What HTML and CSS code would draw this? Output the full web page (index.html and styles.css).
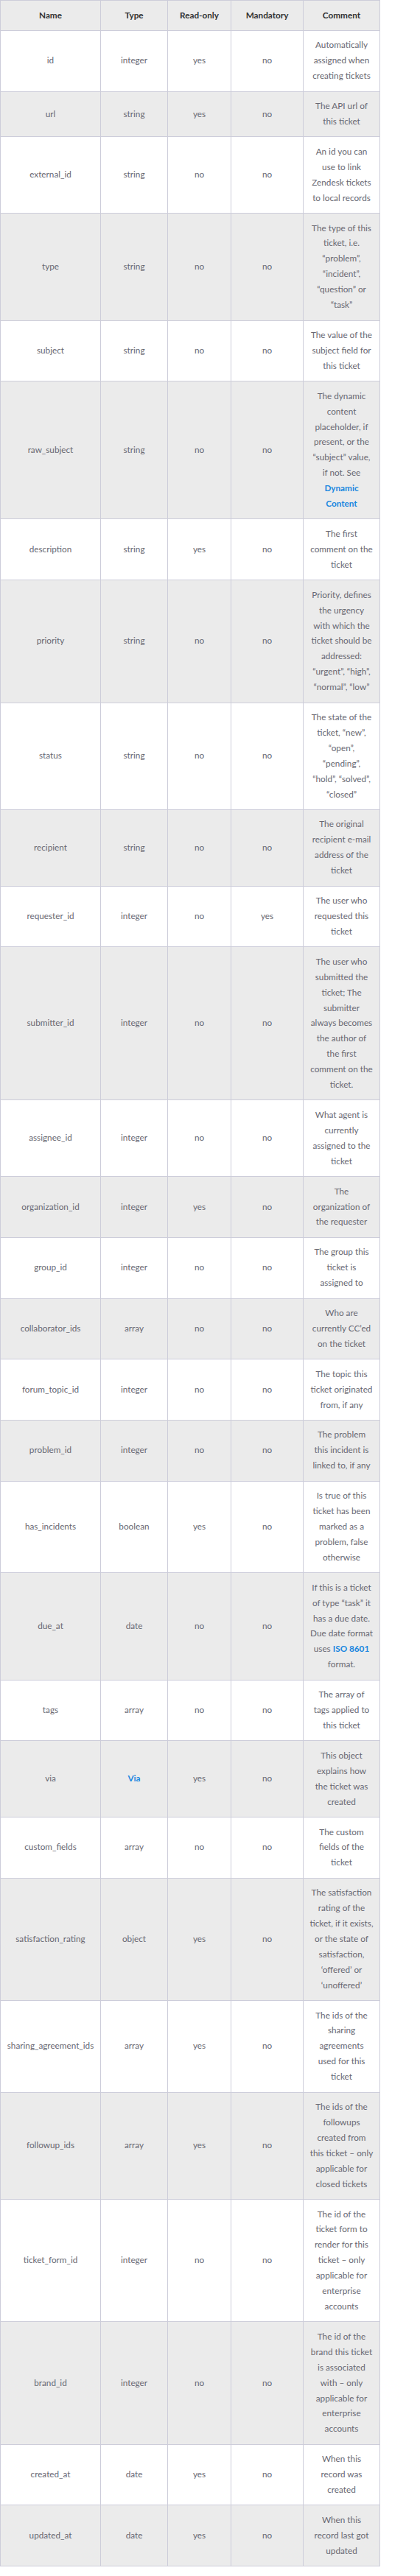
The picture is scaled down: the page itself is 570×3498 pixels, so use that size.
FILE: index.html
```html
<!DOCTYPE html>
<html lang="en">
<head>
<meta charset="utf-8">
<title>Ticket fields</title>
<link rel="stylesheet" href="styles.css">
</head>
<body>
<table class="fields">
  <colgroup>
    <col class="c-name">
    <col class="c-type">
    <col class="c-ro">
    <col class="c-man">
    <col class="c-com">
  </colgroup>
  <thead>
    <tr><th>Name</th><th>Type</th><th>Read-only</th><th>Mandatory</th><th>Comment</th></tr>
  </thead>
  <tbody>
    <tr><td>id</td><td>integer</td><td>yes</td><td>no</td><td class="com">Automatically<br>assigned when<br>creating tickets</td></tr>
    <tr><td>url</td><td>string</td><td>yes</td><td>no</td><td class="com">The API url of<br>this ticket</td></tr>
    <tr><td>external_id</td><td>string</td><td>no</td><td>no</td><td class="com">An id you can<br>use to link<br>Zendesk tickets<br>to local records</td></tr>
    <tr><td>type</td><td>string</td><td>no</td><td>no</td><td class="com">The type of this<br>ticket, i.e.<br>“problem”,<br>“incident”,<br>“question” or<br>“task”</td></tr>
    <tr><td>subject</td><td>string</td><td>no</td><td>no</td><td class="com">The value of the<br>subject field for<br>this ticket</td></tr>
    <tr><td>raw_subject</td><td>string</td><td>no</td><td>no</td><td class="com">The dynamic<br>content<br>placeholder, if<br>present, or the<br>“subject” value,<br>if not. See<br><a href="#">Dynamic<br>Content</a></td></tr>
    <tr><td>description</td><td>string</td><td>yes</td><td>no</td><td class="com">The first<br>comment on the<br>ticket</td></tr>
    <tr><td>priority</td><td>string</td><td>no</td><td>no</td><td class="com">Priority, defines<br>the urgency<br>with which the<br>ticket should be<br>addressed:<br>“urgent”, “high”,<br>“normal”, “low”</td></tr>
    <tr><td>status</td><td>string</td><td>no</td><td>no</td><td class="com">The state of the<br>ticket, “new”,<br>“open”,<br>“pending”,<br>“hold”, “solved”,<br>“closed”</td></tr>
    <tr><td>recipient</td><td>string</td><td>no</td><td>no</td><td class="com">The original<br>recipient e-mail<br>address of the<br>ticket</td></tr>
    <tr><td>requester_id</td><td>integer</td><td>no</td><td>yes</td><td class="com">The user who<br>requested this<br>ticket</td></tr>
    <tr><td>submitter_id</td><td>integer</td><td>no</td><td>no</td><td class="com">The user who<br>submitted the<br>ticket; The<br>submitter<br>always becomes<br>the author of<br>the first<br>comment on the<br>ticket.</td></tr>
    <tr><td>assignee_id</td><td>integer</td><td>no</td><td>no</td><td class="com">What agent is<br>currently<br>assigned to the<br>ticket</td></tr>
    <tr><td>organization_id</td><td>integer</td><td>yes</td><td>no</td><td class="com">The<br>organization of<br>the requester</td></tr>
    <tr><td>group_id</td><td>integer</td><td>no</td><td>no</td><td class="com">The group this<br>ticket is<br>assigned to</td></tr>
    <tr><td>collaborator_ids</td><td>array</td><td>no</td><td>no</td><td class="com">Who are<br>currently CC’ed<br>on the ticket</td></tr>
    <tr><td>forum_topic_id</td><td>integer</td><td>no</td><td>no</td><td class="com">The topic this<br>ticket originated<br>from, if any</td></tr>
    <tr><td>problem_id</td><td>integer</td><td>no</td><td>no</td><td class="com">The problem<br>this incident is<br>linked to, if any</td></tr>
    <tr><td>has_incidents</td><td>boolean</td><td>yes</td><td>no</td><td class="com">Is true of this<br>ticket has been<br>marked as a<br>problem, false<br>otherwise</td></tr>
    <tr><td>due_at</td><td>date</td><td>no</td><td>no</td><td class="com">If this is a ticket<br>of type “task” it<br>has a due date.<br>Due date format<br>uses <a href="#">ISO 8601</a><br>format.</td></tr>
    <tr><td>tags</td><td>array</td><td>no</td><td>no</td><td class="com">The array of<br>tags applied to<br>this ticket</td></tr>
    <tr><td>via</td><td><a href="#">Via</a></td><td>yes</td><td>no</td><td class="com">This object<br>explains how<br>the ticket was<br>created</td></tr>
    <tr><td>custom_fields</td><td>array</td><td>no</td><td>no</td><td class="com">The custom<br>fields of the<br>ticket</td></tr>
    <tr><td>satisfaction_rating</td><td>object</td><td>yes</td><td>no</td><td class="com">The satisfaction<br>rating of the<br>ticket, if it exists,<br>or the state of<br>satisfaction,<br>‘offered’ or<br>‘unoffered’</td></tr>
    <tr><td>sharing_agreement_ids</td><td>array</td><td>yes</td><td>no</td><td class="com">The ids of the<br>sharing<br>agreements<br>used for this<br>ticket</td></tr>
    <tr><td>followup_ids</td><td>array</td><td>yes</td><td>no</td><td class="com">The ids of the<br>followups<br>created from<br>this ticket – only<br>applicable for<br>closed tickets</td></tr>
    <tr><td>ticket_form_id</td><td>integer</td><td>no</td><td>no</td><td class="com">The id of the<br>ticket form to<br>render for this<br>ticket – only<br>applicable for<br>enterprise<br>accounts</td></tr>
    <tr><td>brand_id</td><td>integer</td><td>no</td><td>no</td><td class="com">The id of the<br>brand this ticket<br>is associated<br>with – only<br>applicable for<br>enterprise<br>accounts</td></tr>
    <tr><td>created_at</td><td>date</td><td>yes</td><td>no</td><td class="com">When this<br>record was<br>created</td></tr>
    <tr><td>updated_at</td><td>date</td><td>yes</td><td>no</td><td class="com">When this<br>record last got<br>updated</td></tr>
  </tbody>
</table>
</body>
</html>
```

FILE: styles.css
```css
html, body {
  margin: 0;
  padding: 0;
  background: #ffffff;
}

body {
  font-family: Lato, "Open Sans", "Liberation Sans", sans-serif;
  font-size: 11.75px;
  line-height: 20.9px;
  color: #686872;
}

.fields {
  border-collapse: collapse;
  table-layout: fixed;
  width: 515px;
}

.c-name { width: 136px; }
.c-type { width: 91px; }
.c-ro { width: 86px; }
.c-man { width: 98px; }
.c-com { width: 104px; }

.fields th,
.fields td {
  border: 1px solid #cdcdda;
  padding: 9.5px 2px;
  text-align: center;
  vertical-align: middle;
}

.fields th {
  background: #ebebeb;
  color: #333333;
  font-weight: 700;
}

.fields tbody tr:nth-child(even) {
  background: #ebebeb;
}

.fields .com {
  white-space: nowrap;
}

.fields a {
  color: #1a87e0;
  font-weight: 700;
  text-decoration: none;
}
```
